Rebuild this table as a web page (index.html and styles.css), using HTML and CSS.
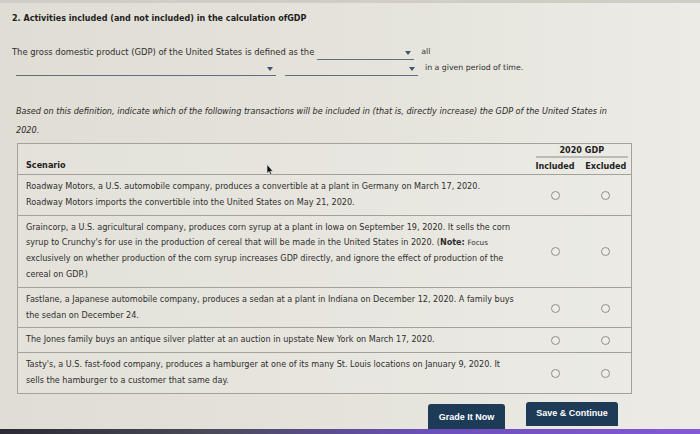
FILE: index.html
```html
<!DOCTYPE html>
<html>
<head>
<meta charset="utf-8">
<link rel="stylesheet" href="styles.css">
</head>
<body>
<div class="screen">
  <div class="topband"></div>
  <div class="page">
    <h2 class="title">2. Activities included (and not included) in the calculation ofGDP</h2>
    <div class="def-row first">
      <span class="txt">The gross domestic product (GDP) of the United States is defined as the</span>
      <span class="dd dd-a"><span class="arrow"></span></span>
      <span class="txt after">all</span>
    </div>
    <div class="def-row second">
      <span class="dd dd-b"><span class="arrow"></span></span>
      <span class="dd dd-c"><span class="arrow"></span></span>
      <span class="txt after">in a given period of time.</span>
    </div>
    <p class="intro">Based on this definition, indicate which of the following transactions will be included in (that is, directly increase) the GDP of the United States in<br>2020.</p>
    <div class="table-wrap">
      <table class="grid">
        <colgroup>
          <col class="c-desc">
          <col class="c-opt">
          <col class="c-opt">
        </colgroup>
        <thead>
          <tr class="top">
            <th class="scen" rowspan="2">Scenario</th>
            <th class="gdp" colspan="2"><div class="gdp-label">2020 GDP</div></th>
          </tr>
          <tr class="sub">
            <th class="col">Included</th>
            <th class="col">Excluded</th>
          </tr>
        </thead>
        <tbody>
          <tr>
            <td class="desc">Roadway Motors, a U.S. automobile company, produces a convertible at a plant in Germany on March 17, 2020.<br>Roadway Motors imports the convertible into the United States on May 21, 2020.</td>
            <td class="opt"><span class="radio"></span></td>
            <td class="opt"><span class="radio"></span></td>
          </tr>
          <tr>
            <td class="desc">Graincorp, a U.S. agricultural company, produces corn syrup at a plant in Iowa on September 19, 2020. It sells the corn<br>syrup to Crunchy's for use in the production of cereal that will be made in the United States in 2020. (<b>Note:</b> <span class="small">Focus</span><br>exclusively on whether production of the corn syrup increases GDP directly, and ignore the effect of production of the<br>cereal on GDP.)</td>
            <td class="opt"><span class="radio"></span></td>
            <td class="opt"><span class="radio"></span></td>
          </tr>
          <tr>
            <td class="desc">Fastlane, a Japanese automobile company, produces a sedan at a plant in Indiana on December 12, 2020. A family buys<br>the sedan on December 24.</td>
            <td class="opt"><span class="radio"></span></td>
            <td class="opt"><span class="radio"></span></td>
          </tr>
          <tr>
            <td class="desc">The Jones family buys an antique silver platter at an auction in upstate New York on March 17, 2020.</td>
            <td class="opt"><span class="radio"></span></td>
            <td class="opt"><span class="radio"></span></td>
          </tr>
          <tr>
            <td class="desc">Tasty's, a U.S. fast-food company, produces a hamburger at one of its many St. Louis locations on January 9, 2020. It<br>sells the hamburger to a customer that same day.</td>
            <td class="opt"><span class="radio"></span></td>
            <td class="opt"><span class="radio"></span></td>
          </tr>
        </tbody>
      </table>
      <svg class="cursor" width="8" height="12" viewBox="0 0 8 12"><path d="M1 0.5 L1 9.5 L3 7.6 L4.6 11 L5.9 10.4 L4.4 7.2 L7 7.2 Z" fill="#111" stroke="#eee" stroke-width="0.6"/></svg>
    </div>
    <div class="actions">
      <button class="btn grade">Grade It Now</button>
      <button class="btn save">Save &amp; Continue</button>
    </div>
  </div>
  <div class="dock"></div>
</div>
</body>
</html>
```

FILE: styles.css
```css
* { box-sizing: border-box; }
html, body { margin: 0; padding: 0; }
body {
  width: 700px;
  height: 434px;
  overflow: hidden;
  font-family: "DejaVu Sans", Verdana, sans-serif;
  color: #2e2e2e;
}
.screen {
  height: 434px;
  display: flex;
  flex-direction: column;
  background: linear-gradient(90deg, #dfddd4 0%, #e4e2da 45%, #e8e7e0 75%, #ecebe6 100%);
}
.topband {
  height: 3px;
  background: #cfcdc4;
  flex: none;
}
.page {
  flex: 1;
  min-height: 0;
  overflow: hidden;
  padding-left: 12px;
}
.title {
  margin: 10px 0 0 0;
  font-size: 8.05px;
  line-height: 12px;
  font-weight: bold;
  color: #1e1e1e;
}
.def-row {
  display: flex;
  align-items: flex-end;
  height: 16px;
  font-size: 8.4px;
  line-height: 12px;
  white-space: nowrap;
}
.def-row.first { margin-top: 19px; }
.def-row.second { margin-left: 4px; }
.txt { padding-bottom: 2px; }
.txt.after { padding-bottom: 2px; margin-left: 7px; font-size: 7.8px; }
.dd {
  display: flex;
  justify-content: flex-end;
  align-items: center;
  height: 13px;
  border-bottom: 1px solid #5f6f80;
  padding-right: 3px;
  flex: none;
}
.dd-a { width: 97px; margin-left: 3px; }
.dd-b { width: 260px; }
.dd-c { width: 133px; margin-left: 9px; }
.arrow {
  width: 0;
  height: 0;
  border-left: 3.5px solid transparent;
  border-right: 3.5px solid transparent;
  border-top: 4px solid #3c5673;
}
.intro {
  margin: 26px 0 0 4px;
  font-size: 8.15px;
  font-style: italic;
  line-height: 19px;
  color: #2a2a2a;
  white-space: nowrap;
}
.table-wrap {
  position: relative;
  margin: 3px 0 0 5px;
  width: 614px;
}
.grid {
  width: 614px;
  table-layout: fixed;
  border-collapse: collapse;
  border: 1px solid #a3a199;
  font-size: 8.1px;
  background: rgba(240, 239, 234, 0.25);
}
.c-desc { width: 512px; }
.c-opt { width: 51px; }
.grid th { font-weight: bold; color: #1e1e1e; padding: 0; }
.grid th.scen {
  text-align: left;
  vertical-align: bottom;
  padding: 0 8px 2px 8px;
  border-bottom: 1px solid #a3a199;
  line-height: 14px;
}
.grid tr.top th.gdp { height: 12px; padding: 2px 3px 0 6px; line-height: 9px; }
.gdp-label {
  text-align: center;
  border-bottom: 2px solid #bdbbb3;
  padding-bottom: 1px;
}
.grid tr.sub th {
  line-height: 12px;
  padding: 2px 0 2px 0;
  border-bottom: 1px solid #a3a199;
  text-align: center;
}
.grid td {
  border-bottom: 1px solid #a3a199;
}
.grid td.desc {
  padding: 4px 0 4px 8px;
  line-height: 15.8px;
  color: #2e2e2e;
  white-space: nowrap;
  overflow: hidden;
}
.grid td.desc b { font-weight: bold; }
.grid td.desc .small { font-size: 7.2px; }
.grid td.opt {
  text-align: center;
  vertical-align: middle;
  padding: 0;
  line-height: 10px;
}
.radio {
  display: inline-block;
  width: 9px;
  height: 9px;
  border-radius: 50%;
  border: 1px solid #8f8d87;
  background: #eeede8;
  vertical-align: middle;
}
.cursor {
  position: absolute;
  left: 249px;
  top: 21px;
}
.actions {
  display: flex;
  justify-content: flex-end;
  align-items: flex-start;
  gap: 21px;
  padding-right: 82px;
  margin-top: 8px;
}
.btn {
  border: none;
  border-radius: 3px 3px 0 0;
  background: #1d3a57;
  color: #fff;
  font-family: "Liberation Sans", Arial, sans-serif;
  font-weight: bold;
  font-size: 9px;
  height: 26px;
  padding: 0;
  margin: 0;
}
.btn.grade { width: 77px; margin-top: 2px; }
.btn.save { width: 92px; height: 24px; padding-bottom: 2px; }
.dock {
  height: 5px;
  flex: none;
  background: linear-gradient(90deg, #2c2b33 0%, #4a4a58 30%, #6a4fb8 60%, #8458d8 100%);
}
```
